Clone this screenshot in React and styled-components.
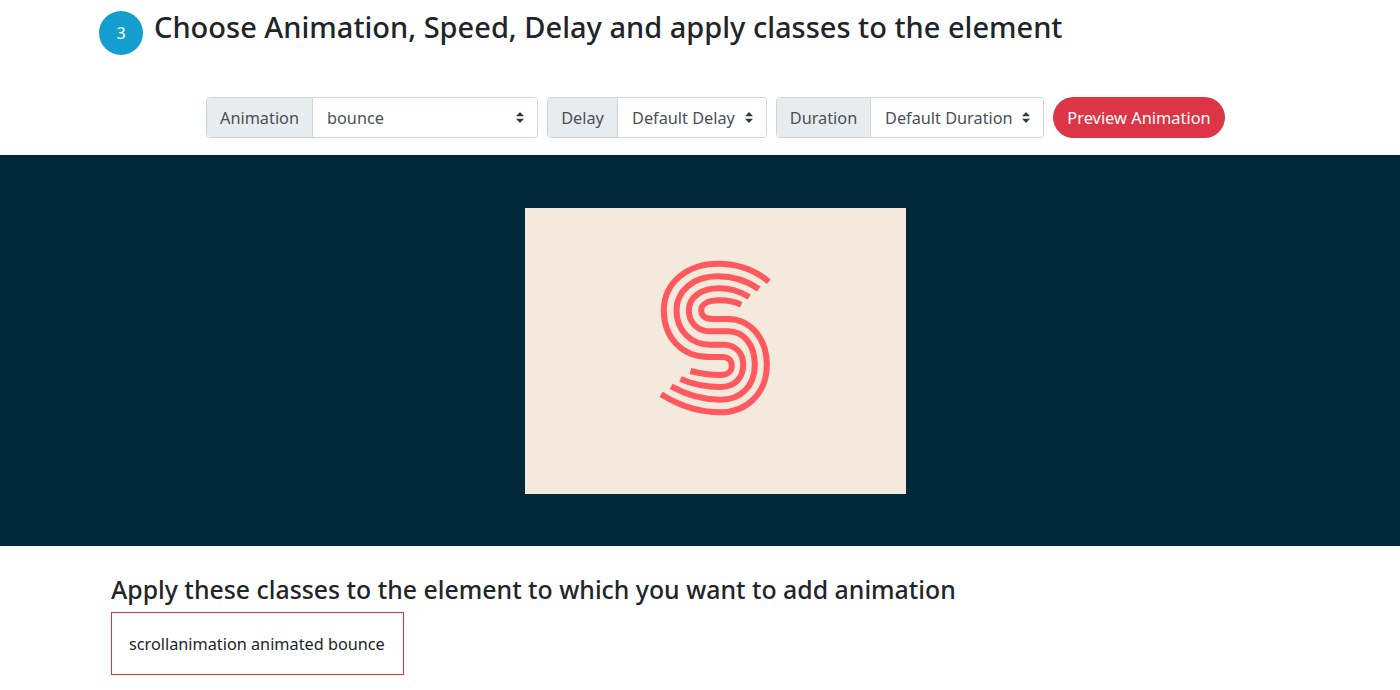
import React from 'react'
import styled, {createGlobalStyle} from 'styled-components';

const Global = createGlobalStyle`
    html, body {
        margin: 0;
        padding: 0;
        background: #fff;
        font-family: "Noto Sans", "Open Sans", sans-serif;
        color: #212529;
    }
`;

const Carets = () => (
    <CaretIcon viewBox="0 0 8 11">
        <path d="M4 0 L8 4.2 H0 Z M4 11 L0 6.8 H8 Z" fill="#343a40"/>
    </CaretIcon>
);

const Field = ({label, value, width, labelWidth}) => (
    <Group $width={width}>
        <Addon $width={labelWidth}>{label}</Addon>
        <Select>
            <span>{value}</span>
            <Carets/>
        </Select>
    </Group>
);

const Logo = () => (
    <svg width="117" height="160" viewBox="50 25 350 480" fill="none" stroke="#ff585d" strokeWidth="18">
        <path d="M385 96 C345 62 290 42 232 42 C140 42 70 100 70 182 C70 265 125 322 205 322 L245 322 C262 322 274 332 274 348 C274 365 260 376 240 376 C210 376 180 372 150 364"/>
        <path d="M355 118 C318 93 275 80 232 80 C160 80 108 122 108 182 C108 242 150 285 210 285 L250 285 C285 285 308 310 308 345 C308 385 282 412 240 412 C198 412 157 404 120 388"/>
        <path d="M326 142 C298 125 265 116 235 116 C182 116 145 143 145 182 C145 220 172 245 212 245 L262 245 C310 245 343 285 343 345 C343 410 300 450 240 450 C190 450 138 436 92 410"/>
        <path d="M302 165 C282 156 260 152 238 152 C205 152 182 162 182 182 C182 198 194 208 215 208 L262 208 C328 208 379 265 379 345 C379 430 320 488 240 488 C178 488 115 468 62 434"/>
    </svg>
);

export default function App() {
    return (
        <>
            <Global/>
            <Page>
                <StepRow>
                    <StepNumber>3</StepNumber>
                    <Title>Choose Animation, Speed, Delay and apply classes to the element</Title>
                </StepRow>
                <Controls>
                    <Field label="Animation" value="bounce" width="332px" labelWidth="106px"/>
                    <Field label="Delay" value="Default Delay" width="220px" labelWidth="70px"/>
                    <Field label="Duration" value="Default Duration" width="268px" labelWidth="94px"/>
                    <PreviewButton>Preview Animation</PreviewButton>
                </Controls>
                <Stage>
                    <Card><Logo/></Card>
                </Stage>
                <Output>
                    <Subtitle>Apply these classes to the element to which you want to add animation</Subtitle>
                    <ClassBox>scrollanimation animated bounce</ClassBox>
                </Output>
            </Page>
        </>
    )
}

const Page = styled.div`
    width: 1400px;
    height: 690px;
    overflow: hidden;
`;
const StepRow = styled.div`
    display: flex;
    align-items: flex-start;
    gap: 11px;
    padding: 11px 0 0 99px;
    height: 97px;
    box-sizing: border-box;
`;
const StepNumber = styled.div`
    width: 44px;
    height: 44px;
    border-radius: 50%;
    background: #149ecf;
    color: #fff;
    font-size: 16px;
    display: flex;
    align-items: center;
    justify-content: center;
`;
const Title = styled.h1`
    margin: 0;
    font-size: 29px;
    font-weight: 500;
    line-height: 32px;
    color: #212529;
`;
const Controls = styled.div`
    display: flex;
    justify-content: center;
    gap: 9px;
    height: 58px;
    padding-left: 31px;
    box-sizing: border-box;
`;
const Group = styled.div`
    display: flex;
    width: ${p => p.$width};
    height: 41px;
    box-sizing: border-box;
    border: 1px solid #ced4da;
    border-radius: 4px;
    overflow: hidden;
    font-size: 16.3px;
    color: #495057;
`;
const Addon = styled.div`
    width: ${p => p.$width};
    flex-shrink: 0;
    box-sizing: border-box;
    background: #e9ecef;
    border-right: 1px solid #ced4da;
    display: flex;
    align-items: center;
    justify-content: center;
`;
const Select = styled.div`
    flex: 1;
    display: flex;
    align-items: center;
    justify-content: space-between;
    padding: 0 13px 0 14px;
    background: #fff;
`;
const CaretIcon = styled.svg`
    width: 8px;
    height: 11px;
    flex-shrink: 0;
`;
const PreviewButton = styled.button`
    width: 172px;
    height: 41px;
    border: none;
    border-radius: 21px;
    background: #dc3545;
    color: #fff;
    font-family: inherit;
    font-size: 16.4px;
    padding: 0;
`;
const Stage = styled.div`
    background: #00283b;
    height: 391px;
    display: flex;
    align-items: center;
    justify-content: center;
    padding-left: 31px;
    box-sizing: border-box;
`;
const Card = styled.div`
    width: 381px;
    height: 286px;
    background: #f4e9dd;
    display: flex;
    align-items: center;
    justify-content: center;
    padding-bottom: 25px;
    box-sizing: border-box;
`;
const Output = styled.div`
    padding: 26px 0 0 111px;
`;
const Subtitle = styled.h2`
    margin: 0 0 6px;
    font-size: 24.85px;
    font-weight: 500;
    line-height: 34px;
    color: #212529;
`;
const ClassBox = styled.div`
    width: 293px;
    height: 63px;
    box-sizing: border-box;
    border: 1px solid #dc3545;
    display: flex;
    align-items: center;
    padding-left: 17px;
    font-size: 16.25px;
    color: #212529;
`;
